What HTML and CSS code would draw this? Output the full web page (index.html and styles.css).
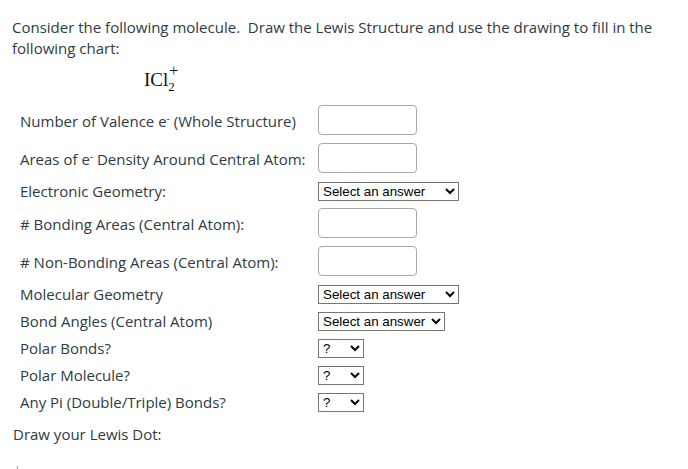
FILE: index.html
```html
<!DOCTYPE html>
<html>
<head>
<meta charset="utf-8">
<link rel="stylesheet" href="styles.css">
</head>
<body>
<div class="page">
  <p class="intro">Consider the following molecule.&nbsp; Draw the Lewis Structure and use the drawing to fill in the following chart:</p>
  <div class="formula">ICl<span class="subsup"><span class="sp">+</span><span class="sb">2</span></span></div>
  <div class="chart">
    <div class="row inp">
      <span class="label">Number of Valence e<sup class="neg">-</sup> (Whole Structure)</span>
      <input class="box" type="text">
    </div>
    <div class="row inp">
      <span class="label">Areas of e<sup class="neg">-</sup> Density Around Central Atom:</span>
      <input class="box" type="text">
    </div>
    <div class="row sel">
      <span class="label">Electronic Geometry:</span>
      <select class="pick wide"><option>Select an answer</option><option>trigonal bipyramidal</option></select>
    </div>
    <div class="row inp">
      <span class="label"># Bonding Areas (Central Atom):</span>
      <input class="box" type="text">
    </div>
    <div class="row inp">
      <span class="label"># Non-Bonding Areas (Central Atom):</span>
      <input class="box" type="text">
    </div>
    <div class="row sel">
      <span class="label">Molecular Geometry</span>
      <select class="pick wide"><option>Select an answer</option><option>trigonal bipyramidal</option></select>
    </div>
    <div class="row sel">
      <span class="label">Bond Angles (Central Atom)</span>
      <select class="pick mid"><option>Select an answer</option><option>180</option></select>
    </div>
    <div class="row sel">
      <span class="label">Polar Bonds?</span>
      <select class="pick small"><option>?</option><option>Yes</option><option>No</option></select>
    </div>
    <div class="row sel">
      <span class="label">Polar Molecule?</span>
      <select class="pick small"><option>?</option><option>Yes</option><option>No</option></select>
    </div>
    <div class="row sel">
      <span class="label">Any Pi (Double/Triple) Bonds?</span>
      <select class="pick small"><option>?</option><option>Yes</option><option>No</option></select>
    </div>
  </div>
  <p class="draw">Draw your Lewis Dot:</p>
  <div class="mark"></div>
</div>
</body>
</html>
```
FILE: styles.css
```css
html, body {
  margin: 0;
  padding: 0;
  background: #ffffff;
}
.page {
  font-family: "Open Sans", "DejaVu Sans", sans-serif;
  font-size: 15px;
  color: #2d3b45;
  overflow: hidden;
  height: 469px;
}
.intro {
  margin: 0;
  padding: 17px 20px 0 12px;
  line-height: 21px;
}
.formula {
  box-sizing: border-box;
  margin-top: 6px;
  padding-left: 144px;
  font-family: "Liberation Serif", "DejaVu Serif", serif;
  font-size: 19px;
  line-height: 30px;
  height: 40px;
  color: #111;
}
.subsup {
  display: inline-flex;
  flex-direction: column;
  vertical-align: 10px;
}
.sp {
  font-size: 16px;
  line-height: 12px;
  margin-left: 1px;
}
.sb {
  font-size: 13px;
  line-height: 13px;
  margin-top: 3px;
}
.chart {
  display: flex;
  flex-direction: column;
  gap: 8px;
  padding-left: 20px;
}
.row {
  display: grid;
  grid-template-columns: 298px auto;
  align-items: start;
  justify-items: start;
}
.row.sel {
  margin-top: 1px;
  margin-bottom: -1px;
}
.label {
  line-height: 19px;
  white-space: nowrap;
}
.row.inp .label {
  padding-top: 7px;
}
.neg {
  font-size: 10px;
  line-height: 0;
  vertical-align: 5px;
}
.box {
  box-sizing: border-box;
  width: 99px;
  height: 30px;
  margin: 0;
  border: 1px solid #a9a9a9;
  border-radius: 4px;
  background: #fff;
  padding: 0 6px;
}
.pick {
  box-sizing: border-box;
  height: 19px;
  margin: 0;
  font-family: "Liberation Sans", Arial, sans-serif;
  font-size: 13.333px;
  color: #000;
  border: 1px solid #767676;
  border-radius: 0;
  background: #fff;
}
.pick.wide { width: 141px; }
.pick.mid { width: 127px; }
.pick.small { width: 46px; }
.draw {
  margin: 13px 0 0;
  padding-left: 13px;
  line-height: 21px;
}
.mark {
  margin: 21px 0 0 17px;
  width: 1px;
  height: 3px;
  background: #9aa0a5;
}
```
